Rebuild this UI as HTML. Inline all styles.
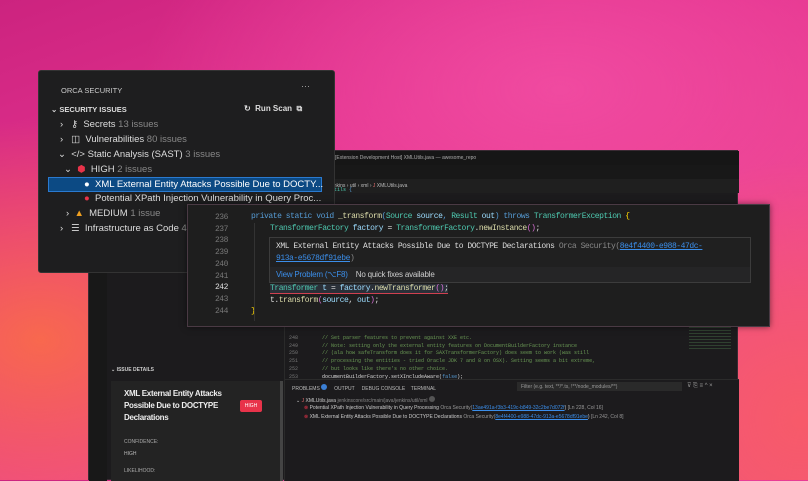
<!DOCTYPE html>
<html><head><style>
*{margin:0;padding:0;box-sizing:border-box}
body{width:808px;height:480px;overflow:hidden;position:relative;font-family:"Liberation Sans",sans-serif;
background:radial-gradient(ellipse 300px 220px at 40px 340px,#f8684e 0%,rgba(248,104,78,0) 100%),
radial-gradient(ellipse 260px 260px at 800px 420px,#f75a6a 0%,rgba(247,90,106,0) 100%),
radial-gradient(ellipse 420px 240px at 560px 90px,#f04aa0 0%,rgba(240,74,160,0) 100%),
linear-gradient(160deg,#cc237f 0%,#e4338f 35%,#ef4a8e 70%,#f0577a 100%);}
.abs{position:absolute}
.mono{font-family:"Liberation Mono",monospace}
.o{position:absolute;font-size:9.5px;color:#ddd;white-space:nowrap}
.g{color:#888}
</style></head><body>

<!-- back VS Code window -->
<div class="abs" style="left:88px;top:150px;width:650px;height:330px;background:#1c1b1d;border:1px solid #3a2a33">
  <div class="abs" style="left:0;top:0;width:650px;height:14px;background:#161616;color:#aaa;font-size:5px;padding:4px 0 0 246px">[Extension Development Host] XMLUtils.java — awesome_repo</div>
  <div class="abs" style="left:195px;top:14px;width:455px;height:14px;background:#181818"></div>
  <div class="abs" style="left:195px;top:28px;width:455px;height:14px;background:#1f1f1f;color:#bbb;font-size:5px;padding:4px 0 0 10px">c › main › java › jenkins › util › xml › <span style="color:#e06c6c">J</span> XMLUtils.java</div>
  <div class="abs mono" style="left:200px;top:36px;font-size:5px;color:#569cd6">inal class <span style="color:#4ec9b0">XMLUtils</span> {</div>
  <div class="abs" style="left:195px;top:0;width:1px;height:330px;background:#2a2a2a"></div>
  <div class="abs" style="left:0;top:0;width:18px;height:330px;background:#181818"></div>
  <div class="abs mono" style="left:200px;top:176px;font-size:5px;line-height:7.8px;color:#6a9955;white-space:pre">
<span style="color:#777">248</span>        // Set parser features to prevent against XXE etc.
<span style="color:#777">249</span>        // Note: setting only the external entity features on DocumentBuilderFactory instance
<span style="color:#777">250</span>        // (ala how safeTransform does it for SAXTransformerFactory) does seem to work (was still
<span style="color:#777">251</span>        // processing the entities - tried Oracle JDK 7 and 8 on OSX). Setting seems a bit extreme,
<span style="color:#777">252</span>        // but looks like there's no other choice.
<span style="color:#777">253</span>        <span style="color:#ddd">documentBuilderFactory.setXIncludeAware(<span style="color:#569cd6">false</span>);</span></div>
  <div class="abs" style="left:600px;top:170px;width:42px;height:28px;background:repeating-linear-gradient(#3c5a3c 0 1px,transparent 1px 3px);opacity:.6"></div>
  <div class="abs" style="left:22px;top:216px;font-size:5px;color:#ccc;font-weight:bold">⌄ ISSUE DETAILS</div>
  <div class="abs" style="left:22px;top:230px;width:170px;height:100px;background:#232323"></div>
  <div class="abs" style="left:191px;top:230px;width:3px;height:100px;background:#444"></div>
  <div class="abs" style="left:35px;top:237px;font-size:8px;line-height:12px;color:#eee;font-weight:bold;letter-spacing:-0.3px">XML External Entity Attacks<br>Possible Due to DOCTYPE<br>Declarations</div>
  <div class="abs" style="left:151px;top:249px;width:22px;height:12px;background:#e8334a;border-radius:2px;color:#fff;font-size:5px;text-align:center;line-height:12px">HIGH</div>
  <div class="abs" style="left:35px;top:288px;font-size:5px;color:#aaa">CONFIDENCE:</div>
  <div class="abs" style="left:35px;top:300px;font-size:5px;color:#bbb">HIGH</div>
  <div class="abs" style="left:35px;top:317px;font-size:5px;color:#aaa">LIKELIHOOD:</div>
  <!-- problems -->
  <div class="abs" style="left:196px;top:228px;width:454px;height:102px;background:#1c1b1d;border-top:1px solid #2b2b2b"></div>
  <div class="abs" style="left:203px;top:233px;font-size:5px;color:#bbb">PROBLEMS <span style="display:inline-block;width:6px;height:6px;border-radius:3px;background:#3b7fd4"></span> &nbsp;&nbsp;&nbsp;&nbsp;OUTPUT&nbsp;&nbsp;&nbsp;&nbsp; DEBUG CONSOLE &nbsp;&nbsp;&nbsp;TERMINAL</div>
  <div class="abs" style="left:428px;top:231px;width:165px;height:9px;background:#2a2a2a;color:#999;font-size:5px;padding:2px 4px">Filter (e.g. text, **/*.ts, !**/node_modules/**)</div>
  <div class="abs" style="left:598px;top:231px;font-size:6px;color:#999">⊽ ⎘ ≡ ^ ×</div>
  <div class="abs" style="left:207px;top:245px;font-size:5px;color:#ccc">⌄ <span style="color:#e06c6c">J</span> XMLUtils.java <span style="color:#888">jenkinscore/src/main/java/jenkins/util/xml</span> <span style="display:inline-block;width:6px;height:6px;border-radius:3px;background:#555"></span></div>
  <div class="abs" style="left:215px;top:254px;font-size:5px;color:#ccc"><span style="color:#e8334a">⊗</span> Potential XPath Injection Vulnerability in Query Processing <span style="color:#999">Orca Security(</span><span style="color:#3b8eea;text-decoration:underline">13ae491a-f3b3-419c-b849-32c2be7d072f</span>) <span style="color:#999">[Ln 228, Col 16]</span></div>
  <div class="abs" style="left:215px;top:263px;font-size:5px;color:#ccc"><span style="color:#e8334a">⊗</span> XML External Entity Attacks Possible Due to DOCTYPE Declarations <span style="color:#999">Orca Security(</span><span style="color:#3b8eea;text-decoration:underline">8e4f4400-e988-47dc-913a-e5678df91ebe</span>) <span style="color:#999">[Ln 242, Col 8]</span></div>
</div>

<!-- Orca panel -->
<div class="abs" style="left:38px;top:70px;width:297px;height:203px;background:#1e1e1f;border:1px solid #333;border-radius:3px;color:#ccc">
  <div class="abs" style="left:22px;top:15px;font-size:7.5px;color:#ccc">ORCA SECURITY</div>
  <div class="abs" style="left:262px;top:10px;font-size:9px;color:#aaa">···</div>
  <div class="abs" style="left:12px;top:34px;font-size:7.5px;font-weight:bold;color:#ddd">⌄ SECURITY ISSUES</div>
  <div class="abs" style="left:205px;top:33px;font-size:8px;font-weight:bold;color:#ddd">↻ &nbsp;Run Scan &nbsp;⧉</div>
  <div class="o" style="left:21px;top:48px">›&nbsp;&nbsp;&nbsp;⚷&nbsp; Secrets <span class="g">13 issues</span></div>
  <div class="o" style="left:21px;top:63px">›&nbsp;&nbsp;&nbsp;◫&nbsp; Vulnerabilities <span class="g">80 issues</span></div>
  <div class="o" style="left:19px;top:78px">⌄&nbsp;&nbsp;&lt;/&gt; Static Analysis (SAST) <span class="g">3 issues</span></div>
  <div class="o" style="left:25px;top:93px">⌄&nbsp;&nbsp;<span style="color:#e8334a">⬢</span>&nbsp; HIGH <span class="g">2 issues</span></div>
  <div class="abs" style="left:9px;top:106px;width:274px;height:15px;background:#0c4a84;border:1px solid #2a7ad0"></div>
  <div class="o" style="left:45px;top:108px;color:#fff">●&nbsp; XML External Entity Attacks Possible Due to DOCTY...</div>
  <div class="o" style="left:45px;top:122px"><span style="color:#e8334a">●</span>&nbsp; Potential XPath Injection Vulnerability in Query Proc...</div>
  <div class="o" style="left:27px;top:137px">›&nbsp;&nbsp;<span style="color:#f0a020">▲</span>&nbsp; MEDIUM <span class="g">1 issue</span></div>
  <div class="o" style="left:21px;top:152px">›&nbsp;&nbsp;&nbsp;☰&nbsp; Infrastructure as Code <span class="g">4</span></div>
</div>

<!-- code popup -->
<div class="abs mono" style="left:187px;top:204px;width:583px;height:123px;background:#1e1e1e;border:1px solid #4a3a44;box-shadow:0 0 6px rgba(0,0,0,.5);font-size:8px;letter-spacing:-0.45px">
  <div class="abs" style="left:0;top:7px;width:40px;text-align:right;line-height:11.7px;color:#777;white-space:pre">236
237
238
239
240
241
<span style="color:#ddd">242</span>
243
244</div>
  <div class="abs" style="left:63px;top:7px;color:#569cd6;white-space:pre">private static void <span style="color:#dcdcaa">_transform</span>(<span style="color:#4ec9b0">Source</span> <span style="color:#9cdcfe">source</span>, <span style="color:#4ec9b0">Result</span> <span style="color:#9cdcfe">out</span>) throws <span style="color:#4ec9b0">TransformerException</span> <span style="color:#ffd700">{</span></div>
  <div class="abs" style="left:82px;top:19px;color:#4ec9b0;white-space:pre">TransformerFactory <span style="color:#9cdcfe">factory</span> <span style="color:#ddd">=</span> TransformerFactory<span style="color:#ddd">.</span><span style="color:#dcdcaa">newInstance</span><span style="color:#da70d6">()</span><span style="color:#ddd">;</span></div>
  <div class="abs" style="left:81px;top:32px;width:482px;height:46px;border:1px solid #3c3c3c;background:#202020"></div>
  <div class="abs" style="left:88px;top:37px;color:#ddd;white-space:pre">XML External Entity Attacks Possible Due to DOCTYPE Declarations <span style="color:#888">Orca Security(</span><span style="color:#3b8eea;text-decoration:underline">8e4f4400-e988-47dc-</span></div>
  <div class="abs" style="left:88px;top:49px;color:#3b8eea"><span style="text-decoration:underline">913a-e5678df91ebe</span><span style="color:#888">)</span></div>
  <div class="abs" style="left:82px;top:62px;width:480px;height:15px;background:#252526"></div>
  <div class="abs" style="left:88px;top:65px;font-family:'Liberation Sans',sans-serif;font-size:8px;letter-spacing:-0.2px;color:#ccc"><span style="color:#3b8eea">View Problem (⌥F8)</span> &nbsp;&nbsp;&nbsp;No quick fixes available</div>
  <div class="abs" style="left:82px;top:79px;color:#4ec9b0;white-space:pre;background:#2a3038;border-bottom:1px solid #d04050">Transformer <span style="color:#9cdcfe">t</span> <span style="color:#ddd">=</span> <span style="color:#9cdcfe">factory</span><span style="color:#ddd">.</span><span style="color:#dcdcaa">newTransformer</span><span style="color:#da70d6">()</span><span style="color:#ddd">;</span></div>
  <div class="abs" style="left:82px;top:91px;color:#ddd;white-space:pre">t.<span style="color:#dcdcaa">transform</span><span style="color:#da70d6">(</span><span style="color:#9cdcfe">source</span>, <span style="color:#9cdcfe">out</span><span style="color:#da70d6">)</span>;</div>
  <div class="abs" style="left:63px;top:102px;color:#ffd700">}</div>
  <div class="abs" style="left:66px;top:18px;width:1px;height:98px;background:#333"></div>
</div>
</body></html>
